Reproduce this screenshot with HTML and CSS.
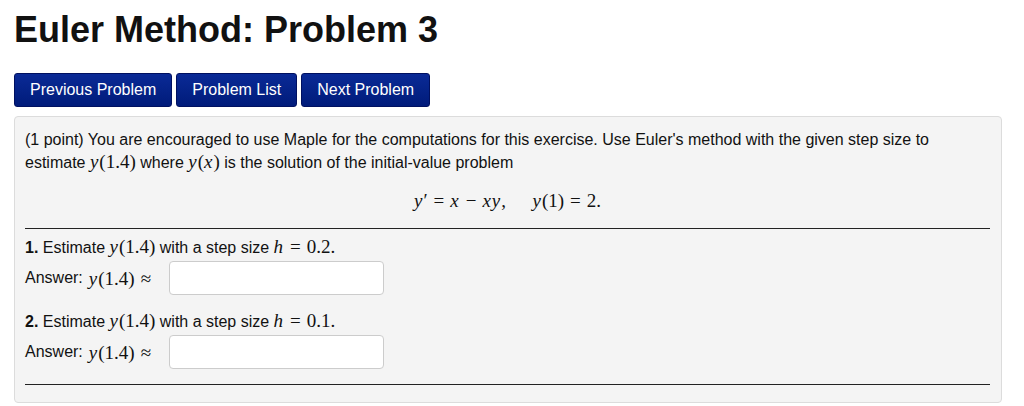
FILE: index.html
```html
<!DOCTYPE html>
<html lang="en">
<head>
  <meta charset="UTF-8">
  <title>Euler Method: Problem 3</title>
  <link rel="stylesheet" href="styles.css">
</head>
<body>
  <h1 class="title">Euler Method: Problem 3</h1>

  <div class="nav">
    <button class="nav-btn">Previous Problem</button>
    <button class="nav-btn">Problem List</button>
    <button class="nav-btn">Next Problem</button>
  </div>

  <div class="problem">
    <p class="intro">
      (1 point) You are encouraged to use Maple for the computations for this exercise. Use Euler's method with the given step size to<br>
      estimate <span class="m"><i>y</i>(1.4)</span> where <span class="m"><i>y</i>(<i>x</i>)</span> is the solution of the initial-value problem
    </p>

    <div class="display">
      <span class="m"><i>y</i>&prime;<span class="op">=</span><i>x</i><span class="op">&minus;</span><i>x</i><i>y</i>,</span>
      <span class="m gap"><i>y</i>(1)<span class="op">=</span>2.</span>
    </div>

    <hr>

    <div class="part">
      <p><b>1.</b> Estimate <span class="m"><i>y</i>(1.4)</span> with a step size <span class="m"><i>h</i><span class="op">=</span>0.2.</span></p>
      <label class="answer">Answer: <span class="m"><i>y</i>(1.4)<span class="op">&asymp;</span></span> <input type="text"></label>
    </div>

    <div class="part last">
      <p><b>2.</b> Estimate <span class="m"><i>y</i>(1.4)</span> with a step size <span class="m"><i>h</i><span class="op">=</span>0.1.</span></p>
      <label class="answer">Answer: <span class="m"><i>y</i>(1.4)<span class="op">&asymp;</span></span> <input type="text"></label>
    </div>

    <hr>
  </div>
</body>
</html>
```

FILE: styles.css
```css
body {
  font-family: "Liberation Sans", Arial, sans-serif;
  font-size: 16px;
  color: #111;
  background: #fff;
  margin: 0;
  padding: 0 22px 0 14px;
}

.title {
  font-size: 36px;
  font-weight: bold;
  margin: 0;
  padding-top: 9px;
  line-height: 42px;
}

.nav {
  display: flex;
  gap: 4px;
  margin-top: 22px;
}

.nav-btn {
  font-family: "Liberation Sans", Arial, sans-serif;
  font-size: 16px;
  color: #fff;
  height: 34px;
  padding: 0 15px;
  background: linear-gradient(#0a2a96, #001b7a);
  border: 1px solid #001060;
  border-radius: 3px;
}

.problem {
  margin-top: 9px;
  background: #f4f4f4;
  border: 1px solid #dcdcdc;
  border-radius: 4px;
  padding: 11px 11px 17px 10px;
}

.problem p {
  margin: 0;
  line-height: 23px;
}

.m {
  font-family: "Liberation Serif", "Times New Roman", serif;
  font-size: 19px;
  line-height: 1;
}

.m i {
  padding-right: 1px;
}

.op {
  margin: 0 6px;
}

.display {
  text-align: center;
  padding: 16px 0 14px;
  line-height: 24px;
}

.display .gap {
  margin-left: 22px;
}

hr {
  border: none;
  border-top: 1px solid #222;
  margin: 0;
}

.part {
  padding-top: 7px;
  padding-bottom: 8px;
}

.part.last {
  padding-bottom: 15px;
}

.answer {
  display: flex;
  align-items: center;
  gap: 6px;
  margin-top: 2px;
}

.answer .op {
  margin-right: 0;
}

.answer input {
  width: 215px;
  height: 34px;
  margin-left: 12px;
  box-sizing: border-box;
  border: 1px solid #ccc;
  border-radius: 4px;
  background: #fff;
}
```
